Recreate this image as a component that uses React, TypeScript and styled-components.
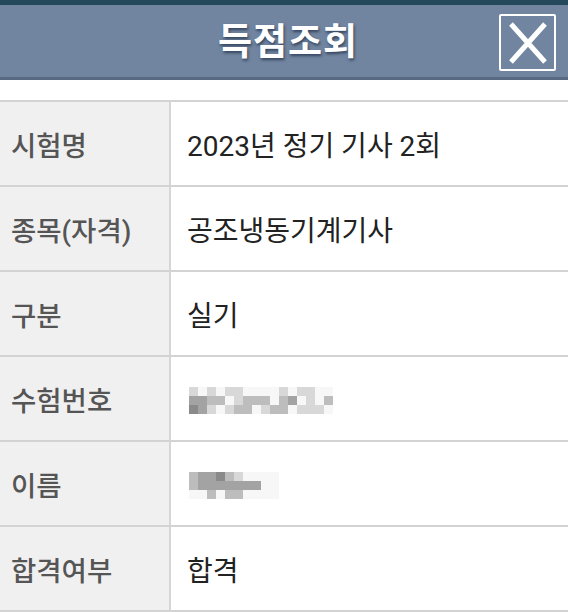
import React from "react";
import styled, { createGlobalStyle } from "styled-components";

const GlobalStyle = createGlobalStyle`
  html, body {
    margin: 0;
    padding: 0;
    background: #fff;
    font-family: Roboto, "Noto Sans CJK KR", "Noto Sans", sans-serif;
  }
`;

interface Row {
  label: string;
  value?: string;
  blur?: "number" | "name";
}

const rows: Row[] = [
  { label: "시험명", value: "2023년 정기 기사 2회" },
  { label: "종목(자격)", value: "공조냉동기계기사" },
  { label: "구분", value: "실기" },
  { label: "수험번호", blur: "number" },
  { label: "이름", blur: "name" },
  { label: "합격여부", value: "합격" },
];

const NUMBER_PIXELS = [
  "1010110000101100",
  "3322012220230102",
  "4310122012201110",
];

const NAME_PIXELS = ["2334210000", "2333333300", "0020220000"];

const shades = ["#f7f7f7", "#d8d8d8", "#bdbdbd", "#a3a3a3", "#8a8a8a"];

const Mosaic: React.FC<{ grid: string[] }> = ({ grid }) => (
  <MosaicGrid>
    {grid.map((line, y) => (
      <MosaicLine key={y}>
        {line.split("").map((c, x) => (
          <Pixel key={x} style={{ background: shades[Number(c)] }} />
        ))}
      </MosaicLine>
    ))}
  </MosaicGrid>
);

const App: React.FC = () => {
  return (
    <>
      <GlobalStyle />
      <Page>
        <TopStrip />
        <Header>
          <Title>득점조회</Title>
          <CloseButton aria-label="닫기">
            <svg width="46" height="46" viewBox="0 0 46 46">
              <path
                d="M6 4 L40 42 M40 4 L6 42"
                stroke="#fff"
                strokeWidth="5"
                fill="none"
              />
            </svg>
          </CloseButton>
        </Header>
        <Table>
          {rows.map((r) => (
            <TableRow key={r.label}>
              <Label>{r.label}</Label>
              <Value>
                {r.value}
                {r.blur === "number" && <Mosaic grid={NUMBER_PIXELS} />}
                {r.blur === "name" && <Mosaic grid={NAME_PIXELS} />}
              </Value>
            </TableRow>
          ))}
        </Table>
      </Page>
    </>
  );
};

export default App;

const Page = styled.div`
  width: 568px;
  height: 612px;
  overflow: hidden;
  background: #fff;
`;

const TopStrip = styled.div`
  height: 5px;
  background: #24495a;
`;

const Header = styled.div`
  position: relative;
  height: 72px;
  background: #7285a0;
  border-bottom: 3px solid #586a82;
  display: flex;
  align-items: center;
  justify-content: center;
`;

const Title = styled.h1`
  margin: 0 0 4px 8px;
  font-size: 37px;
  font-weight: 700;
  color: #fff;
  letter-spacing: 1px;
  text-shadow: 1px 2px 3px rgba(30, 45, 70, 0.75);
`;

const CloseButton = styled.button`
  position: absolute;
  right: 12px;
  top: 9px;
  width: 57px;
  height: 57px;
  padding: 0;
  border: 2px solid #fff;
  border-radius: 2px;
  background: transparent;
  display: flex;
  align-items: center;
  justify-content: center;
`;

const Table = styled.div`
  margin-top: 20px;
  border-top: 2px solid #d3d3d3;
`;

const TableRow = styled.div`
  display: flex;
  height: 83px;
  border-bottom: 2px solid #d3d3d3;
`;

const Label = styled.div`
  width: 171px;
  box-sizing: border-box;
  flex-shrink: 0;
  padding-left: 11px;
  background: #f0f0f0;
  border-right: 2px solid #d6d6d6;
  display: flex;
  align-items: center;
  font-size: 27.5px;
  font-weight: 500;
  color: #555;
`;

const Value = styled.div`
  flex: 1;
  padding-left: 16px;
  display: flex;
  align-items: center;
  font-size: 28px;
  color: #222;
`;

const MosaicGrid = styled.div`
  display: flex;
  flex-direction: column;
  margin-left: 2px;
  margin-top: 4px;
`;

const MosaicLine = styled.div`
  display: flex;
`;

const Pixel = styled.span`
  width: 9px;
  height: 9px;
`;
